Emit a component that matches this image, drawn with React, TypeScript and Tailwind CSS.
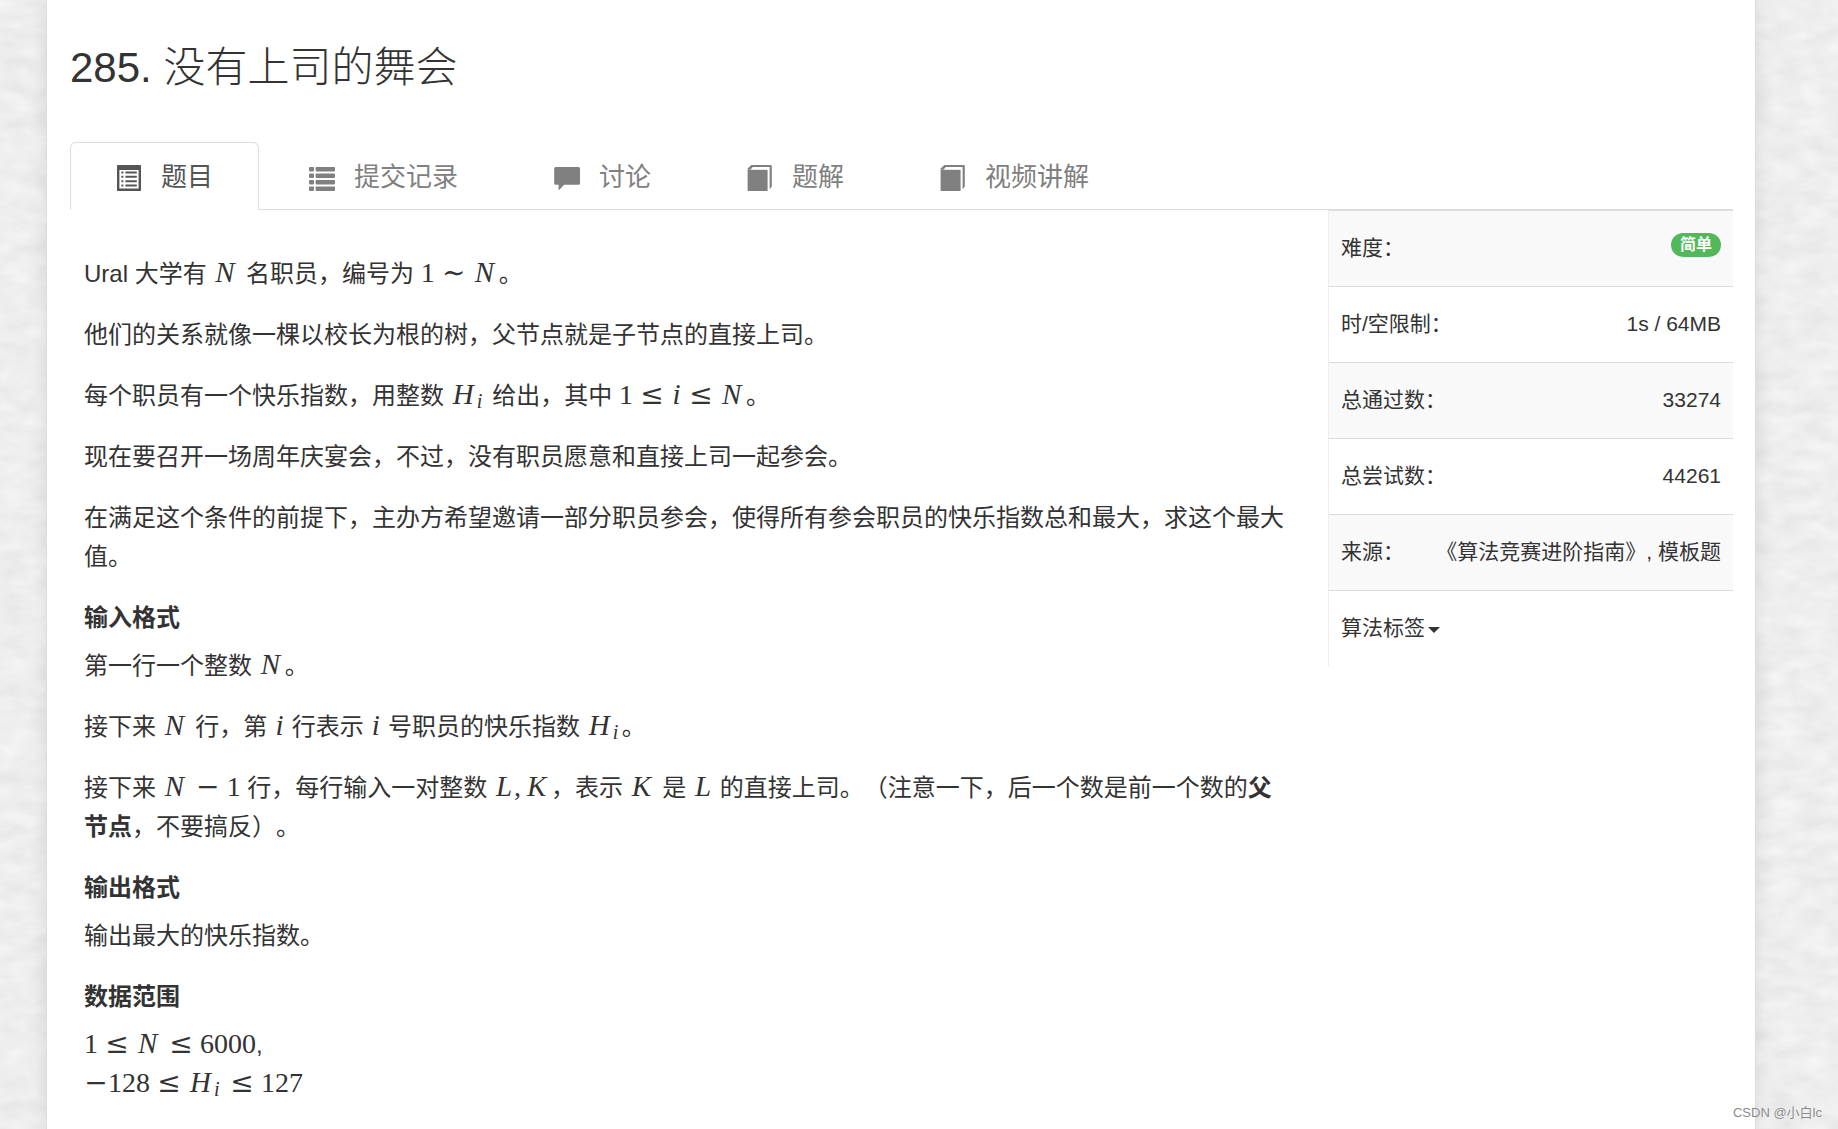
import type { ReactNode } from 'react'
import { clsx } from 'clsx'

function ListAltIcon() {
  return (
    <svg viewBox="0 0 26 26" className="mt-[3px] size-[26px]" fill="currentColor" aria-hidden="true">
      <path
        fillRule="evenodd"
        d="M1.6 0h22.8a.6.6 0 0 1 .6.6v24.8a.6.6 0 0 1-.6.6H1.6a.6.6 0 0 1-.6-.6V.6a.6.6 0 0 1 .6-.6zM3.4 5v18.4h19.2V5z"
      />
      <path d="M5.4 6.4h2v2h-2zM9.4 6.4h11.4v2H9.4zM5.4 10.8h2v2h-2zM9.4 10.8h11.4v2H9.4zM5.4 15.2h2v2h-2zM9.4 15.2h11.4v2H9.4zM5.4 19.6h2v2h-2zM9.4 19.6h11.4v2H9.4z" />
    </svg>
  )
}

function ListIcon() {
  return (
    <svg viewBox="0 0 26 26" className="mt-[3px] size-[26px]" fill="currentColor" aria-hidden="true">
      {[2, 8.5, 15, 21.5].map((y) => (
        <g key={y}>
          <rect x="0" y={y} width="5" height="4.4" rx="0.8" />
          <rect x="6.6" y={y} width="19.4" height="4.4" rx="0.8" />
        </g>
      ))}
    </svg>
  )
}

function CommentIcon() {
  return (
    <svg viewBox="0 0 26 26" className="mt-[3px] size-[26px]" fill="currentColor" aria-hidden="true">
      <path d="M1.8 2h22.6A1.6 1.6 0 0 1 26 3.6v14.6a1.6 1.6 0 0 1-1.6 1.6H10.2L4.6 25.6v-5.8H1.8a1.6 1.6 0 0 1-1.6-1.6V3.6A1.6 1.6 0 0 1 1.8 2z" />
    </svg>
  )
}

function BookIcon() {
  return (
    <svg viewBox="0 0 26 26" className="mt-[3px] size-[26px]" fill="currentColor" aria-hidden="true">
      <path d="M.6 4.8h20V26H.6z" />
      <path d="M.6 4.8V3.6L4.4 0h19.4a1 1 0 0 1 1 1v20.6l-2.2 2.6V2H5.8L3.4 4.8z" />
    </svg>
  )
}

const tabs = [
  { label: '题目', icon: <ListAltIcon />, active: true },
  { label: '提交记录', icon: <ListIcon /> },
  { label: '讨论', icon: <CommentIcon /> },
  { label: '题解', icon: <BookIcon /> },
  { label: '视频讲解', icon: <BookIcon /> },
]

// Italic variable
function V({ children, narrow }: { children: ReactNode; narrow?: boolean }) {
  return (
    <i
      className={clsx(
        "inline-block pl-[2px] font-['Liberation_Serif',serif] text-[29px] leading-[1]",
        narrow ? 'min-w-[20px]' : 'min-w-[26px]',
      )}
    >
      {children}
    </i>
  )
}

function Index() {
  return (
    <i className="inline-block min-w-[11px] text-center font-['Liberation_Serif',serif] text-[29px] leading-[1]">
      i
    </i>
  )
}

function Num({ children }: { children: ReactNode }) {
  return (
    <span className="font-['Liberation_Serif',serif] text-[28px] leading-[1]">{children}</span>
  )
}

// Binary operator or relation, or a leading sign when unary
function Op({ children, unary }: { children: ReactNode; unary?: boolean }) {
  return (
    <span
      className={clsx(
        "inline-block w-6 text-center font-['DejaVu_Serif',serif] text-[28px] leading-[1]",
        !unary && 'mx-[7px]',
      )}
    >
      {children}
    </span>
  )
}

function Hi() {
  return (
    <span className="whitespace-nowrap">
      <V>H</V>
      <sub className="bottom-[-4px] inline-block w-[9px] font-['Liberation_Serif',serif] text-[20px] leading-[0] italic">
        i
      </sub>
    </span>
  )
}

function Title({ children }: { children: ReactNode }) {
  return <h4 className="mt-[22px] mb-[9px] font-bold">{children}</h4>
}

function Statement() {
  return (
    <article className="min-w-0 flex-1 pt-11 pr-[38px] pb-5 pl-[14px] text-[24px] leading-[39px] [text-spacing-trim:space-all]">
      <div className="flex flex-col gap-[22px]">
        <p>
          Ural 大学有 <V>N</V> 名职员，编号为 <Num>1</Num>
          <Op>∼</Op>
          <V>N</V>。
        </p>
        <p>他们的关系就像一棵以校长为根的树，父节点就是子节点的直接上司。</p>
        <p>
          每个职员有一个快乐指数，用整数 <Hi /> 给出，其中 <Num>1</Num>
          <Op>≤</Op>
          <Index />
          <Op>≤</Op>
          <V>N</V>。
        </p>
        <p>现在要召开一场周年庆宴会，不过，没有职员愿意和直接上司一起参会。</p>
        <p>
          在满足这个条件的前提下，主办方希望邀请一部分职员参会，使得所有参会职员的快乐指数总和最大，求这个最大值。
        </p>
      </div>
      <Title>输入格式</Title>
      <div className="flex flex-col gap-[22px]">
        <p>
          第一行一个整数 <V>N</V>。
        </p>
        <p>
          接下来 <V>N</V> 行，第 <Index /> 行表示 <Index /> 号职员的快乐指数 <Hi />。
        </p>
        <p>
          接下来 <V>N</V>
          <Op>−</Op>
          <Num>1</Num> 行，每行输入一对整数 <V narrow>L</V>
          <span className="mr-1">
            <Num>,</Num>
          </span>
          <V>K</V>，表示 <V>K</V> 是 <V narrow>L</V> 的直接上司。（注意一下，后一个数是前一个数的
          <strong>父节点</strong>，不要搞反）。
        </p>
      </div>
      <Title>输出格式</Title>
      <p>输出最大的快乐指数。</p>
      <Title>数据范围</Title>
      <p>
        <Num>1</Num>
        <Op>≤</Op>
        <V>N</V>
        <Op>≤</Op>
        <Num>6000</Num>,<br />
        <Op unary>−</Op>
        <Num>128</Num>
        <Op>≤</Op>
        <Hi />
        <Op>≤</Op>
        <Num>127</Num>
      </p>
    </article>
  )
}

const info = [
  {
    label: '难度：',
    value: (
      <span className="mb-[5px] block rounded-full bg-[#53b85a] px-[9px] text-[16px] leading-6 font-bold text-white">
        简单
      </span>
    ),
  },
  { label: '时/空限制：', value: '1s / 64MB' },
  { label: '总通过数：', value: '33274' },
  { label: '总尝试数：', value: '44261' },
  { label: '来源：', value: '《算法竞赛进阶指南》, 模板题' },
]

function InfoTable() {
  return (
    <aside className="w-[405px] shrink-0 self-start border-l border-[#eee] text-[21px] leading-[30px] [text-spacing-trim:space-all]">
      <table className="block">
        <tbody className="block">
          {info.map(({ label, value }) => (
            <tr
              key={label}
              className="flex h-[76px] items-center justify-between border-t border-[#ddd] px-3 pb-[2px] whitespace-nowrap odd:bg-[#f9f9f9]"
            >
              <th scope="row" className="text-left font-normal">
                {label}
              </th>
              <td>{value}</td>
            </tr>
          ))}
          <tr className="flex h-[76px] items-center border-t border-[#ddd] px-3 pb-[2px]">
            <td>
              <button type="button" className="flex items-center gap-[3px]">
                算法标签
                <svg viewBox="0 0 12 6" className="mt-1 h-[6px] w-3" fill="currentColor" aria-hidden="true">
                  <path d="M0 0h12L6 6z" />
                </svg>
              </button>
            </td>
          </tr>
        </tbody>
      </table>
    </aside>
  )
}

function Paper() {
  return (
    <svg className="absolute inset-0 -z-10 size-full" aria-hidden="true">
      <filter id="paper" x="0" y="0" width="100%" height="100%" colorInterpolationFilters="sRGB">
        <feTurbulence type="fractalNoise" baseFrequency="0.035 0.07" numOctaves="3" seed="4" />
        <feColorMatrix values="0.08 0 0 0 0.893 0.08 0 0 0 0.893 0.08 0 0 0 0.893 0 0 0 0 1" />
      </filter>
      <rect width="100%" height="100%" filter="url(#paper)" />
    </svg>
  )
}

export default function App() {
  return (
    <div className="relative isolate min-h-screen bg-[#eee] pr-[82px] pl-[46px] font-['Liberation_Sans','Noto_Sans_CJK_SC',sans-serif] text-[#333]">
      <Paper />
      <main className="min-h-screen border-x border-[#ddd] bg-white pr-[22px] pl-[23px] shadow-[0_0_18px_rgba(0,0,0,0.1)]">
        <h1 className="pt-[38px] text-[42px] leading-[60px] font-light">285. 没有上司的舞会</h1>
        <nav className="mt-11 flex gap-1 border-b border-[#ddd]">
          {tabs.map(({ label, icon, active }) => (
            <a
              key={label}
              href="#"
              className={clsx(
                '-mb-px flex h-[68px] items-center gap-[19px] rounded-t-md border px-[45px] pt-px text-[26px] leading-9',
                active
                  ? 'border-[#ddd] border-b-white bg-white text-[#555]'
                  : 'border-transparent text-[#808080]',
              )}
            >
              {icon}
              {label}
            </a>
          ))}
        </nav>
        <div className="flex">
          <Statement />
          <InfoTable />
        </div>
      </main>
      <div className="absolute right-4 bottom-2 text-[13px] leading-4 text-[#8a8a8a] [text-shadow:0_0_1px_#fff]">
        CSDN @小白lc
      </div>
    </div>
  )
}
